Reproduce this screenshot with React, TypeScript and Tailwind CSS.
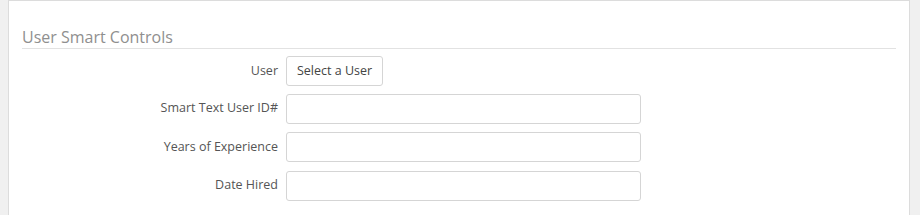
const fields = ["Smart Text User ID#", "Years of Experience", "Date Hired"];

export default function App() {
  return (
    <div className="h-[215px] w-[920px] overflow-hidden bg-[#f0f0f0] pl-2 pr-[10px] font-['Open_Sans',sans-serif]">
      <div className="h-full border-l border-r border-t border-[#dcdcdc] bg-white pl-[13px] pr-[13px] pt-[26px]">
        <h3 className="border-b border-[#e2e2e2] pb-[1px] text-[16px] leading-[20px] text-[#8f8f8f]">
          User Smart Controls
        </h3>
        <div className="mt-[7px] flex flex-col gap-[8.5px] text-[12.5px] text-[#555]">
          <div className="-mb-[1px] flex items-center">
            <label className="w-[264px] pr-[8px] text-right">User</label>
            <button
              type="button"
              className="h-[30px] rounded-[3px] border border-[#d5d5d5] bg-white px-[10px] text-[12.5px] text-[#444]"
            >
              Select a User
            </button>
          </div>
          {fields.map((f) => (
            <div key={f} className="flex items-center">
              <label className="w-[264px] pr-[8px] text-right">{f}</label>
              <input
                type="text"
                className="h-[30px] w-[355px] rounded-[3px] border border-[#d5d5d5] bg-white px-2 text-[12.5px] outline-none"
              />
            </div>
          ))}
        </div>
      </div>
    </div>
  );
}
